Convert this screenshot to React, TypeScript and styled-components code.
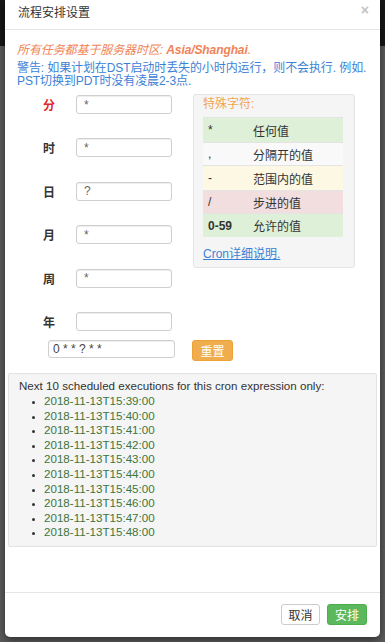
import React from "react";
import styled, { createGlobalStyle } from "styled-components";

const Global = createGlobalStyle`
  html, body { margin: 0; padding: 0; }
  body {
    width: 385px;
    height: 642px;
    overflow: hidden;
    background: linear-gradient(to bottom, #161616 0, #161616 46px, #5b5b5b 46px);
    font-family: "Liberation Sans", "Noto Sans CJK SC", sans-serif;
  }
`;

const Modal = styled.div`
  margin-left: 5px;
  width: 375px;
  height: 637px;
  background: #fff;
  border-radius: 0 0 5px 5px;
  box-shadow: 0 3px 9px rgba(0, 0, 0, 0.5);
  display: flex;
  flex-direction: column;
  color: #333;
  font-size: 12px;
`;

const Header = styled.div`
  height: 23px;
  border-bottom: 1px solid #e5e5e5;
  display: flex;
  align-items: flex-start;
  justify-content: space-between;
  padding: 6px 11px 0 13px;
`;

const Title = styled.div`
  font-size: 12px;
  line-height: 14px;
  color: #333;
`;

const Close = styled.div`
  font-size: 14px;
  font-weight: bold;
  line-height: 10px;
  color: #c4c4c4;
  margin-top: -1px;
`;

const Body = styled.div`
  flex: 1;
  padding: 13px 3px 0;
`;

const Note = styled.div<{ $tone: "orange" | "blue" }>`
  padding: 0 9px;
  font-size: 12px;
  line-height: ${(p) => (p.$tone === "orange" ? "14px" : "13px")};
  color: ${(p) => (p.$tone === "orange" ? "#f08356" : "#3b82d6")};
  font-style: ${(p) => (p.$tone === "orange" ? "italic" : "normal")};
  margin-top: ${(p) => (p.$tone === "orange" ? "0" : "4.5px")};
  letter-spacing: -0.1px;
`;

const Strong = styled.b`
  font-weight: bold;
`;

const Grid = styled.div`
  display: grid;
  grid-template-columns: 185px 162px;
  align-items: start;
  margin-top: 6.5px;
`;

const LeftCol = styled.div`
  display: flex;
  flex-direction: column;
  gap: 24.4px;
  padding-top: 1px;
`;

const Row = styled.div`
  display: flex;
  align-items: center;
  height: 19px;
  padding-left: 29px;
  gap: 15px;
`;

const Label = styled.span<{ $req?: boolean }>`
  width: 24px;
  text-align: center;
  font-weight: bold;
  font-size: 12px;
  color: ${(p) => (p.$req ? "#e3262a" : "#333")};
`;

const Input = styled.input<{ $w: number }>`
  box-sizing: border-box;
  width: ${(p) => p.$w}px;
  height: 19px;
  border: 1px solid #cfcfcf;
  border-radius: 3px;
  padding: 0 7px;
  font-family: "Liberation Sans", "Noto Sans CJK SC", sans-serif;
  font-size: 12px;
  color: #666;
  background: #fff;
  box-shadow: inset 0 1px 1px rgba(0, 0, 0, 0.075);
  outline: none;
`;

const ExprInput = styled(Input)`
  height: 18px;
  padding: 0 4px;
  color: #444;
`;

const Panel = styled.div`
  background: #f5f5f5;
  border: 1px solid #e3e3e3;
  border-radius: 3px;
  padding: 2px 11px 6px 9px;
`;

const PanelTitle = styled.div`
  color: #f2a54f;
  line-height: 14px;
  font-size: 12px;
  margin-bottom: 6px;
`;

const Table = styled.div`
  width: 140px;
  display: flex;
  flex-direction: column;
`;

const TRow = styled.div<{ $bg: string; $h: number }>`
  display: grid;
  grid-template-columns: 50px 1fr;
  align-items: center;
  height: ${(p) => p.$h}px;
  background: ${(p) => p.$bg};
  border-top: 1px solid #e4e4e4;
  box-sizing: border-box;
  font-size: 12px;
  color: #333;
`;

const Sym = styled.span<{ $bold?: boolean }>`
  padding-left: 5px;
  font-weight: ${(p) => (p.$bold ? "bold" : "normal")};
`;

const Link = styled.a`
  display: block;
  margin-top: 10px;
  line-height: 14px;
  color: #3b82d6;
  text-decoration: underline;
  font-size: 12px;
`;

const ExprRow = styled.div`
  display: flex;
  align-items: flex-start;
  margin-top: 9px;
  padding-left: 40px;
  gap: 17px;
`;

const Btn = styled.button<{ $kind: "warn" | "ok" | "plain"; $w: number }>`
  box-sizing: border-box;
  width: ${(p) => p.$w}px;
  height: 21px;
  padding: 0;
  border-radius: 3px;
  font-family: "Liberation Sans", "Noto Sans CJK SC", sans-serif;
  font-size: 12px;
  border: 1px solid
    ${(p) => (p.$kind === "warn" ? "#eea236" : p.$kind === "ok" ? "#4cae4c" : "#ccc")};
  background: ${(p) => (p.$kind === "warn" ? "#f0ad4e" : p.$kind === "ok" ? "#5cb85c" : "#fff")};
  color: ${(p) => (p.$kind === "plain" ? "#333" : "#fff")};
`;

const Results = styled.div`
  margin-top: 12px;
  background: #f5f5f5;
  border: 1px solid #e3e3e3;
  border-radius: 2px;
  padding: 4px 10px 6px;
`;

const ResultsTitle = styled.div`
  line-height: 15px;
  font-size: 11.6px;
  color: #333;
`;

const List = styled.ul`
  margin: 1px 0 0;
  padding-left: 25px;
  list-style: disc;
`;

const Item = styled.li`
  line-height: 14.6px;
  font-size: 11.6px;
  color: #3c763d;
  &::marker { color: #333; font-size: 9px; }
`;

const Footer = styled.div`
  border-top: 1px solid #e5e5e5;
  padding: 11px 13px 12px;
  display: flex;
  justify-content: flex-end;
  gap: 7px;
`;

const fields: { label: string; value: string; req?: boolean }[] = [
  { label: "分", value: "*", req: true },
  { label: "时", value: "*" },
  { label: "日", value: "?" },
  { label: "月", value: "*" },
  { label: "周", value: "*" },
  { label: "年", value: "" },
];

const specials = [
  { sym: "*", desc: "任何值", bg: "#dff0d8", h: 25 },
  { sym: ",", desc: "分隔开的值", bg: "#f9f9f9", h: 23 },
  { sym: "-", desc: "范围内的值", bg: "#fcf8e3", h: 25 },
  { sym: "/", desc: "步进的值", bg: "#f2dede", h: 23 },
  { sym: "0-59", desc: "允许的值", bg: "#dff0d8", h: 24, bold: true },
];

const times = ["39", "40", "41", "42", "43", "44", "45", "46", "47", "48"];

export default function App() {
  return (
    <>
      <Global />
      <Modal>
        <Header>
          <Title>流程安排设置</Title>
          <Close>×</Close>
        </Header>
        <Body>
          <Note $tone="orange">
            所有任务都基于服务器时区: <Strong>Asia/Shanghai</Strong>.
          </Note>
          <Note $tone="blue">
            警告: 如果计划在DST启动时丢失的小时内运行，则不会执行. 例如.
            <br />
            PST切换到PDT时没有凌晨2-3点.
          </Note>
          <Grid>
            <LeftCol>
              {fields.map((f) => (
                <Row key={f.label}>
                  <Label $req={f.req}>{f.label}</Label>
                  <Input $w={96} defaultValue={f.value} />
                </Row>
              ))}
            </LeftCol>
            <Panel>
              <PanelTitle>特殊字符:</PanelTitle>
              <Table>
                {specials.map((s) => (
                  <TRow key={s.sym} $bg={s.bg} $h={s.h}>
                    <Sym $bold={s.bold}>{s.sym}</Sym>
                    <span>{s.desc}</span>
                  </TRow>
                ))}
              </Table>
              <Link href="#">Cron详细说明.</Link>
            </Panel>
          </Grid>
          <ExprRow>
            <ExprInput $w={127} defaultValue="0 * * ? * *" />
            <Btn $kind="warn" $w={41}>重置</Btn>
          </ExprRow>
          <Results>
            <ResultsTitle>Next 10 scheduled executions for this cron expression only:</ResultsTitle>
            <List>
              {times.map((t) => (
                <Item key={t}>2018-11-13T15:{t}:00</Item>
              ))}
            </List>
          </Results>
        </Body>
        <Footer>
          <Btn $kind="plain" $w={39}>取消</Btn>
          <Btn $kind="ok" $w={40}>安排</Btn>
        </Footer>
      </Modal>
    </>
  );
}
